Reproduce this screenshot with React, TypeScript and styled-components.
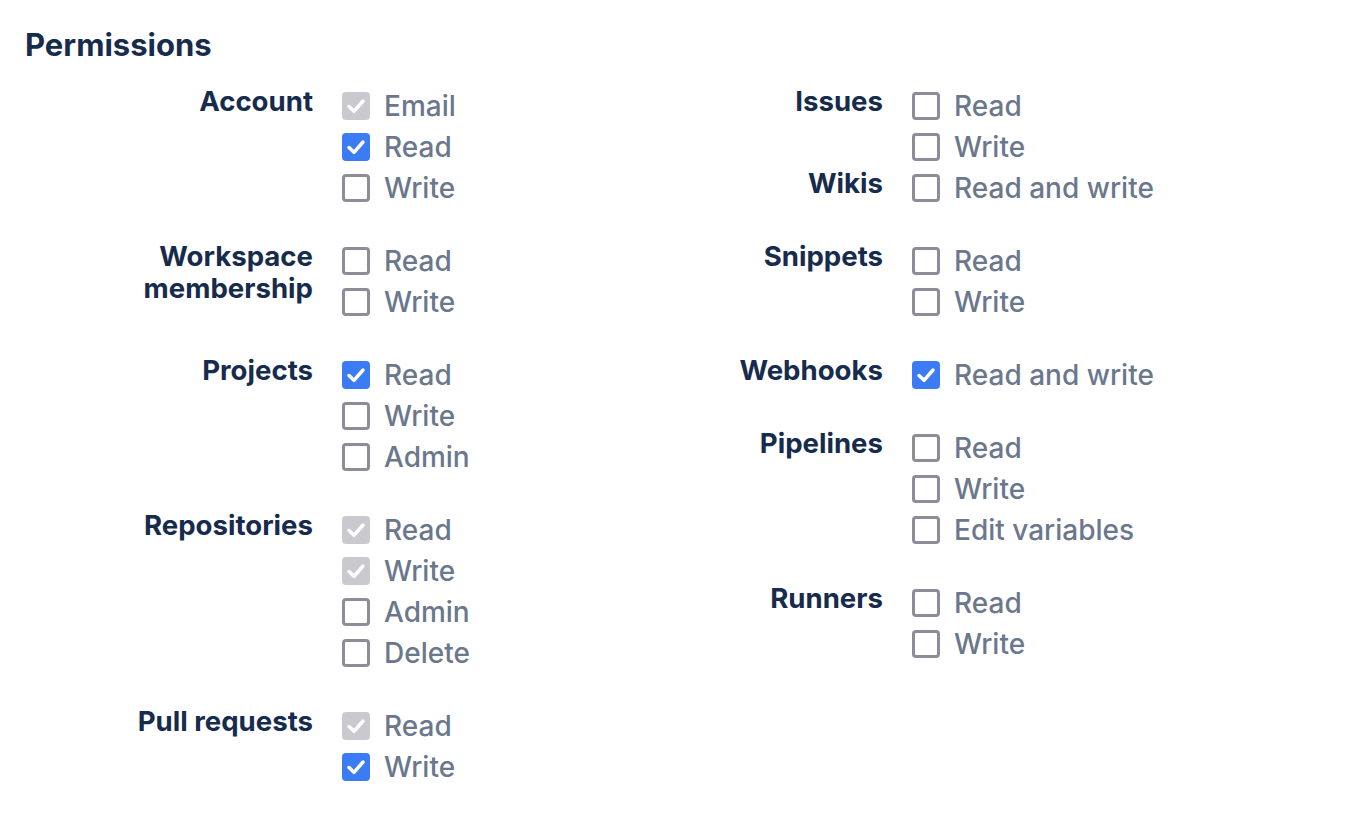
import React from 'react';
import styled, { createGlobalStyle } from 'styled-components';

const GlobalStyle = createGlobalStyle`
  body {
    margin: 0;
    background: #ffffff;
    font-family: Inter, "Noto Sans", sans-serif;
  }
`;

type CheckState = 'off' | 'on' | 'locked';

interface Option {
  label: string;
  state: CheckState;
}

interface Group {
  title: string[];
  options: Option[];
  tight?: boolean;
}

const leftGroups: Group[] = [
  {
    title: ['Account'],
    options: [
      { label: 'Email', state: 'locked' },
      { label: 'Read', state: 'on' },
      { label: 'Write', state: 'off' },
    ],
  },
  {
    title: ['Workspace', 'membership'],
    options: [
      { label: 'Read', state: 'off' },
      { label: 'Write', state: 'off' },
    ],
  },
  {
    title: ['Projects'],
    options: [
      { label: 'Read', state: 'on' },
      { label: 'Write', state: 'off' },
      { label: 'Admin', state: 'off' },
    ],
  },
  {
    title: ['Repositories'],
    options: [
      { label: 'Read', state: 'locked' },
      { label: 'Write', state: 'locked' },
      { label: 'Admin', state: 'off' },
      { label: 'Delete', state: 'off' },
    ],
  },
  {
    title: ['Pull requests'],
    options: [
      { label: 'Read', state: 'locked' },
      { label: 'Write', state: 'on' },
    ],
  },
];

const rightGroups: Group[] = [
  {
    title: ['Issues'],
    options: [
      { label: 'Read', state: 'off' },
      { label: 'Write', state: 'off' },
    ],
  },
  {
    title: ['Wikis'],
    options: [{ label: 'Read and write', state: 'off' }],
    tight: true,
  },
  {
    title: ['Snippets'],
    options: [
      { label: 'Read', state: 'off' },
      { label: 'Write', state: 'off' },
    ],
  },
  {
    title: ['Webhooks'],
    options: [{ label: 'Read and write', state: 'on' }],
  },
  {
    title: ['Pipelines'],
    options: [
      { label: 'Read', state: 'off' },
      { label: 'Write', state: 'off' },
      { label: 'Edit variables', state: 'off' },
    ],
  },
  {
    title: ['Runners'],
    options: [
      { label: 'Read', state: 'off' },
      { label: 'Write', state: 'off' },
    ],
  },
];

const Page = styled.div`
  padding: 26px 23px 40px;
`;

const Heading = styled.h2`
  margin: 0 0 21px 2px;
  font-size: 31px;
  line-height: 38px;
  font-weight: 700;
  color: #172b4d;
`;

const Columns = styled.div`
  display: grid;
  grid-template-columns: 570px 570px;
  align-items: start;
`;

const Column = styled.div`
  display: flex;
  flex-direction: column;
`;

const Fieldset = styled.div<{ $tight?: boolean }>`
  display: grid;
  grid-template-columns: 290px 1fr;
  column-gap: 29px;
  margin-top: ${(p) => (p.$tight ? '0' : '32px')};

  &:first-child {
    margin-top: 0;
  }
`;

const Legend = styled.div`
  text-align: right;
  font-size: 27.6px;
  line-height: 32px;
  font-weight: 700;
  color: #172b4d;
`;

const OptionList = styled.div`
  display: flex;
  flex-direction: column;
`;

const OptionRow = styled.label`
  display: flex;
  align-items: center;
  gap: 14px;
  height: 41px;
  font-size: 28px;
  font-weight: 500;
  color: #6b778c;
`;

const Box = styled.span<{ $state: CheckState }>`
  box-sizing: border-box;
  width: 28px;
  height: 28px;
  border-radius: 4px;
  flex-shrink: 0;
  display: flex;
  align-items: center;
  justify-content: center;
  border: ${(p) => (p.$state === 'off' ? '3px solid #8d8c99' : 'none')};
  background: ${(p) =>
    p.$state === 'on' ? '#3b7cf5' : p.$state === 'locked' ? '#c9c9cf' : '#ffffff'};
`;

const Check = () => (
  <svg width="28" height="28" viewBox="0 0 28 28" fill="none">
    <path
      d="M7 14.5 L12 19.3 L21 9"
      stroke="#ffffff"
      strokeWidth="3.5"
      strokeLinecap="round"
      strokeLinejoin="round"
    />
  </svg>
);

const PermissionGroup: React.FC<{ group: Group }> = ({ group }) => (
  <Fieldset $tight={group.tight}>
    <Legend>
      {group.title.map((line) => (
        <div key={line}>{line}</div>
      ))}
    </Legend>
    <OptionList>
      {group.options.map((opt) => (
        <OptionRow key={opt.label}>
          <Box $state={opt.state}>{opt.state !== 'off' && <Check />}</Box>
          {opt.label}
        </OptionRow>
      ))}
    </OptionList>
  </Fieldset>
);

export default function App() {
  return (
    <Page>
      <GlobalStyle />
      <Heading>Permissions</Heading>
      <Columns>
        <Column>
          {leftGroups.map((g) => (
            <PermissionGroup key={g.title.join(' ')} group={g} />
          ))}
        </Column>
        <Column>
          {rightGroups.map((g) => (
            <PermissionGroup key={g.title.join(' ')} group={g} />
          ))}
        </Column>
      </Columns>
    </Page>
  );
}
